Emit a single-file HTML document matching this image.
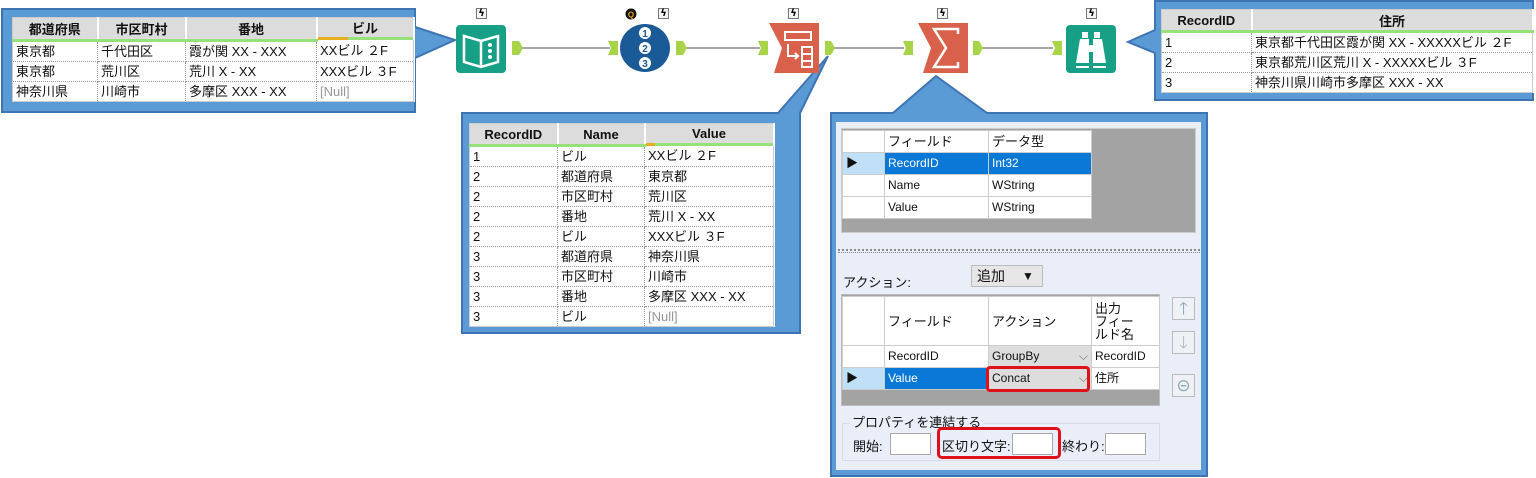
<!DOCTYPE html>
<html><head><meta charset="utf-8"><style>
*{margin:0;padding:0;box-sizing:border-box}
body{width:1536px;height:478px;background:#fff;position:relative;overflow:hidden;font-family:"Liberation Sans","Noto Sans CJK JP",sans-serif;font-size:13px;color:#111}
.a{position:absolute}
table{border-collapse:collapse;position:absolute;background:#fff;table-layout:fixed}
td{height:20px;padding:0 3px;border-right:1px dotted #999;border-bottom:1px dotted #999;white-space:nowrap;font-size:13px;line-height:19px;overflow:hidden}
th{height:22px;background:#dcdcdc;border-right:2px solid #fff;border-bottom:3px solid #98e07a;font-weight:bold;font-size:13px;text-align:center}
th.o{border-bottom:0;background:linear-gradient(to right,#e8b020 var(--w),#98e07a var(--w)) left bottom/100% 3px no-repeat,#dcdcdc;padding-bottom:3px}
.null{color:#999}
.lt{width:11px;height:11px;border:1px solid #777;background:#f4f4f4;font-size:10px;line-height:9px;text-align:center;font-weight:bold;color:#000;font-family:"DejaVu Sans",sans-serif}
.g td{border:1px solid #ccc;border-style:solid;height:22px;font-size:12px;background:#fff;padding:0 3px}
.sel{background:#0a78d6!important;color:#fff}
.rhs{background:#bfe0f7!important}
.inp{background:#fff;border:1px solid #aaa;height:22px;width:41px}
.btn{width:23px;height:23px;border:1px solid #bbb;background:#eef1f6;color:#8aa;text-align:center;font-size:17px;line-height:21px}
</style></head><body>

<svg class="a" style="left:0;top:0" width="1536" height="478">
 <path d="M2,9 H415 V27 L455,40 L415,58 V112 H2 Z" fill="#5b9bd5" stroke="#3f74b4" stroke-width="2"/>
 <path d="M462,113 H778 L828,56 L800,113 V333 H462 Z" fill="#5b9bd5" stroke="#3f74b4" stroke-width="2"/>
 <path d="M831,113 H893 L936,76 L987,113 H1207 V476 H831 Z" fill="#5b9bd5" stroke="#3f74b4" stroke-width="2"/>
 <path d="M1155,1 H1533 V100 H1155 V53 L1128,42 L1155,30 Z" fill="#5b9bd5" stroke="#3f74b4" stroke-width="2"/>
 <line x1="522" y1="48" x2="610" y2="48" stroke="#888" stroke-width="1.5"/>
 <line x1="686" y1="48" x2="760" y2="48" stroke="#888" stroke-width="1.5"/>
 <line x1="834" y1="48" x2="904" y2="48" stroke="#888" stroke-width="1.5"/>
 <line x1="982" y1="48" x2="1053" y2="48" stroke="#888" stroke-width="1.5"/>
 <g fill="#a8d44a">
  <path d="M512,41 h7 l4,7 l-4,7 h-7z"/>
  <path d="M608,41 h10 v14 h-10 l3,-7z"/>
  <path d="M676,41 h7 l4,7 l-4,7 h-7z"/>
  <path d="M758,41 h10 v14 h-10 l3,-7z"/>
  <path d="M825,41 h6 l4,7 l-4,7 h-6z"/>
  <path d="M903,41 h10 v14 h-10 l3,-7z"/>
  <path d="M973,41 h6 l4,7 l-4,7 h-6z"/>
  <path d="M1052,41 h10 v14 h-10 l3,-7z"/>
 </g>
 <rect x="456" y="25" width="50" height="48" rx="4" fill="#17a086"/>
 <path d="M464,36 l17,5 l17,-5 v26 l-17,5 l-17,-5z M481,41 v26" fill="none" stroke="#fff" stroke-width="2.5"/>
 <circle cx="490" cy="45" r="2" fill="#fff"/><circle cx="490" cy="51" r="2" fill="#fff"/><circle cx="490" cy="57" r="2" fill="#fff"/>
 <ellipse cx="645" cy="48" rx="25" ry="24" fill="#1a5a96"/>
 <g fill="#fff"><circle cx="645" cy="33" r="6"/><circle cx="645" cy="48" r="6"/><circle cx="645" cy="63" r="6"/></g>
 <g fill="#1a5a96" font-size="10" font-weight="bold" text-anchor="middle" font-family="Liberation Sans,sans-serif">
  <text x="645" y="37">1</text><text x="645" y="52">2</text><text x="645" y="67">3</text>
 </g>
 <circle cx="631" cy="14" r="5.5" fill="#111"/><text x="631" y="17.5" fill="#e8a020" font-size="8" font-weight="bold" text-anchor="middle">Q</text>
 <path d="M769,23 H819 V73 H774 L782,48 Z" fill="#d9604a"/>
 <path d="M785,32 h26 v8 h-26z" fill="none" stroke="#fff" stroke-width="2"/>
 <path d="M788,44 v12 h10 m-3,-3 l3,3 l-3,3" fill="none" stroke="#fff" stroke-width="2"/>
 <path d="M802,47 h10 v20 h-10z M802,54 h10 M802,61 h10" fill="none" stroke="#fff" stroke-width="2"/>
 <path d="M918,23 H968 V73 H923 L931,48 Z" fill="#d9604a"/>
 <path d="M958,34 v-5 h-24 l12,19 l-12,19 h24 v-5" fill="none" stroke="#fff" stroke-width="2.5"/>
 <rect x="1066" y="25" width="50" height="48" rx="4" fill="#17a086"/>
 <path d="M1082,32 h6 v6 h-6z M1094,32 h6 v6 h-6z M1080,39 h9 v24 h-13 z M1102,39 h-9 v24 h13z" fill="#fff"/>
 <rect x="1087" y="45" width="8" height="7" fill="#fff"/>
 <line x1="1076" y1="67" x2="1089" y2="67" stroke="#fff" stroke-width="2"/><line x1="1093" y1="67" x2="1106" y2="67" stroke="#fff" stroke-width="2"/>
</svg>

<div class="a lt" style="left:476px;top:8px">ϟ</div>
<div class="a lt" style="left:658px;top:8px">ϟ</div>
<div class="a lt" style="left:788px;top:8px">ϟ</div>
<div class="a lt" style="left:937px;top:8px">ϟ</div>
<div class="a lt" style="left:1086px;top:8px">ϟ</div>

<table style="left:12px;top:17px;width:401px;border:1px solid #ccc">
<colgroup><col style="width:85px"><col style="width:88px"><col style="width:131px"><col style="width:97px"></colgroup>
<tr><th>都道府県</th><th>市区町村</th><th>番地</th><th class="o" style="--w:30px">ビル</th></tr>
<tr><td>東京都</td><td>千代田区</td><td>霞が関 XX - XXX</td><td>XXビル ２F</td></tr>
<tr><td>東京都</td><td>荒川区</td><td>荒川 X - XX</td><td>XXXビル ３F</td></tr>
<tr><td>神奈川県</td><td>川崎市</td><td>多摩区 XXX - XX</td><td class="null">[Null]</td></tr>
</table>

<table style="left:469px;top:123px;width:304px;border:1px solid #ccc">
<colgroup><col style="width:88px"><col style="width:87px"><col style="width:129px"></colgroup>
<tr><th>RecordID</th><th>Name</th><th class="o" style="--w:9px">Value</th></tr>
<tr><td>1</td><td>ビル</td><td>XXビル ２F</td></tr>
<tr><td>2</td><td>都道府県</td><td>東京都</td></tr>
<tr><td>2</td><td>市区町村</td><td>荒川区</td></tr>
<tr><td>2</td><td>番地</td><td>荒川 X - XX</td></tr>
<tr><td>2</td><td>ビル</td><td>XXXビル ３F</td></tr>
<tr><td>3</td><td>都道府県</td><td>神奈川県</td></tr>
<tr><td>3</td><td>市区町村</td><td>川崎市</td></tr>
<tr><td>3</td><td>番地</td><td>多摩区 XXX - XX</td></tr>
<tr><td>3</td><td>ビル</td><td class="null">[Null]</td></tr>
</table>

<table style="left:1161px;top:9px;width:371px;border:1px solid #ccc">
<colgroup><col style="width:90px"><col style="width:281px"></colgroup>
<tr><th>RecordID</th><th>住所</th></tr>
<tr><td>1</td><td>東京都千代田区霞が関 XX - XXXXXビル ２F</td></tr>
<tr><td>2</td><td>東京都荒川区荒川 X - XXXXXビル ３F</td></tr>
<tr><td>3</td><td>神奈川県川崎市多摩区 XXX - XX</td></tr>
</table>

<div class="a" style="left:836px;top:122px;width:365px;height:348px;background:#e9eef8"></div>
<div class="a" style="left:841px;top:128px;width:355px;height:105px;background:#a3a3a3;border:1px solid #ccc"></div>
<table class="g" style="left:842px;top:130px;width:249px">
<colgroup><col style="width:42px"><col style="width:104px"><col style="width:103px"></colgroup>
<tr><td></td><td style="font-size:13px">フィールド</td><td style="font-size:13px">データ型</td></tr>
<tr><td class="rhs">▶</td><td class="sel">RecordID</td><td class="sel">Int32</td></tr>
<tr><td></td><td>Name</td><td>WString</td></tr>
<tr><td></td><td>Value</td><td>WString</td></tr>
</table>
<div class="a" style="left:838px;top:249px;width:362px;height:4px;border-top:2px dotted #888;border-bottom:1px dotted #888"></div>
<div class="a" style="left:843px;top:272px;font-size:13px">アクション:</div>
<div class="a" style="left:971px;top:265px;width:72px;height:22px;background:#e6e6e6;border:1px solid #bbb;font-size:14px;line-height:20px;padding-left:5px">追加<span style="position:absolute;left:50px;top:0;font-size:12px">▼</span></div>
<div class="a" style="left:841px;top:294px;width:319px;height:112px;background:#a3a3a3;border:1px solid #bbb"></div>
<table class="g" style="left:842px;top:296px;width:317px">
<colgroup><col style="width:42px"><col style="width:104px"><col style="width:103px"><col style="width:68px"></colgroup>
<tr><td style="height:49px"></td><td style="font-size:13px">フィールド</td><td style="font-size:13px">アクション</td><td style="font-size:13px;line-height:13px;white-space:normal">出力<br>フィー<br>ルド名</td></tr>
<tr><td></td><td>RecordID</td><td style="background:#ddd">GroupBy<span style="float:right;color:#777">⌵</span></td><td>RecordID</td></tr>
<tr><td class="rhs">▶</td><td class="sel">Value</td><td style="background:#ddd">Concat<span style="float:right;color:#777">⌵</span></td><td>住所</td></tr>
</table>
<div class="a" style="left:986px;top:366px;width:104px;height:26px;border:3px solid #e0101a;border-radius:4px"></div>
<div class="a btn" style="left:1172px;top:297px">🡑</div>
<div class="a btn" style="left:1172px;top:331px;color:#bbb">🡓</div>
<div class="a btn" style="left:1172px;top:374px">⊝</div>
<div class="a" style="left:842px;top:423px;width:318px;height:38px;border:1px solid #d6dbe4"></div>
<div class="a" style="left:850px;top:412px;background:#e9eef8;padding:0 2px;font-size:13px">プロパティを連結する</div>
<div class="a" style="left:853px;top:436px;font-size:13px">開始:</div>
<div class="a inp" style="left:890px;top:433px"></div>
<div class="a" style="left:937px;top:427px;width:124px;height:32px;border:3px solid #e0101a;border-radius:5px"></div>
<div class="a" style="left:942px;top:436px;font-size:13px">区切り文字:</div>
<div class="a inp" style="left:1012px;top:433px"></div>
<div class="a" style="left:1062px;top:436px;font-size:13px">終わり:</div>
<div class="a inp" style="left:1105px;top:433px"></div>
</body></html>
